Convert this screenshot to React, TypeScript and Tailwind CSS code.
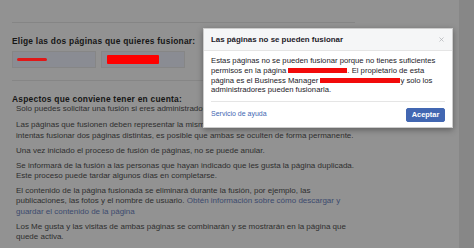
import { X } from 'lucide-react'

const bodyFont = { fontFamily: '"Liberation Sans", Arial, sans-serif' }

function Redacted({ className }: { className: string }): JSX.Element {
  return <span className={`inline-block align-middle bg-[#f20a0a] ${className}`} />
}

function MergeErrorDialog(): JSX.Element {
  return (
    <div className="absolute left-[203px] top-[28px] w-[250px] h-[100px] bg-white flex flex-col shadow-[0_2px_6px_rgba(0,0,0,0.35)] border border-[#7f7f7f]/40">
      {/* Header */}
      <div className="h-[22px] shrink-0 flex items-center justify-between px-[7px] bg-[#f5f6f7] border-b border-[#e5e5e5]">
        <span className="text-[7.9px] font-bold text-[#1d2129]">Las páginas no se pueden fusionar</span>
        <X className="w-[7px] h-[7px] text-[#b0b3b8]" strokeWidth={2.5} />
      </div>

      {/* Body */}
      <div className="px-[7px] pt-[5px] text-[7.7px] leading-[9.8px] text-[#1d2129]">
        <div className="whitespace-nowrap">Estas páginas no se pueden fusionar porque no tienes suficientes</div>
        <div className="whitespace-nowrap">
          permisos en la página <Redacted className="w-[59px] h-[5px] -mt-[1px]" />. El propietario de esta
        </div>
        <div className="whitespace-nowrap">
          página es el Business Manager <Redacted className="w-[80px] h-[5px] -mt-[1px]" />y solo los
        </div>
        <div className="whitespace-nowrap">administradores pueden fusionarla.</div>
      </div>

      {/* Footer */}
      <div className="mx-[7px] mt-auto border-t border-[#e5e5e5] h-[26px] flex items-center justify-between">
        <span className="text-[7px] text-[#4267b2]">Servicio de ayuda</span>
        <button className="w-[39px] h-[14px] bg-[#4267b2] border border-[#4267b2] rounded-[2px] text-white text-[7.4px] font-bold flex items-center justify-center">
          Aceptar
        </button>
      </div>
    </div>
  )
}

function App(): JSX.Element {
  return (
    <div className="relative w-[474px] h-[248px] overflow-hidden bg-[#878787]" style={bodyFont}>
      <div className="w-[459px] h-full bg-[#929292] pl-[12px] pt-[22px] text-[#2b2b2b]">
        <div className="w-[343px] border-t border-[#858585]" />

        <h2 className="mt-[13px] text-[8.4px] font-bold tracking-[0.25px] text-[#161616] leading-[10px]">
          Elige las dos páginas que quieres fusionar:
        </h2>

        <div className="mt-[5px] flex gap-[5px]">
          <div className="w-[84px] h-[17px] bg-[#8a8c93] border border-[#868686] flex items-center pl-[4px]">
            <span className="block w-[30px] h-[3px] bg-[#e01818] rounded-full" />
          </div>
          <div className="w-[84px] h-[17px] bg-[#8a8c93] border border-[#868686] flex items-center pl-[5px]">
            <span className="block w-[52px] h-[9px] bg-[#ff0000] rounded-[1px]" />
          </div>
        </div>

        <div className="mt-[12px] w-[430px] border-t border-[#868686]" />

        <h2 className="mt-[13px] text-[8.4px] font-bold tracking-[0.25px] text-[#161616] leading-[10px]">
          Aspectos que conviene tener en cuenta:
        </h2>

        {/* only the parts not hidden by the dialog are shown */}
        <div className="pl-[4px] text-[8px] leading-[10.4px] text-[#2e2e2e] whitespace-nowrap">
          <p>Solo puedes solicitar una fusión si eres administrador</p>

          <p className="mt-[6px]">
            Las páginas que fusionen deben representar la misma
            <br />
            intentas fusionar dos páginas distintas, es posible que ambas se oculten de forma permanente.
          </p>

          <p className="mt-[4.5px]">Una vez iniciado el proceso de fusión de páginas, no se puede anular.</p>

          <p className="mt-[4.5px]">
            Se informará de la fusión a las personas que hayan indicado que les gusta la página duplicada.
            <br />
            Este proceso puede tardar algunos días en completarse.
          </p>

          <p className="mt-[4.5px]">
            El contenido de la página fusionada se eliminará durante la fusión, por ejemplo, las
            <br />
            publicaciones, las fotos y el nombre de usuario.{' '}
            <span className="text-[#3c4a6e]">Obtén información sobre cómo descargar y</span>
            <br />
            <span className="text-[#3c4a6e]">guardar el contenido de la página</span>
          </p>

          <p className="mt-[4.5px]">
            Los Me gusta y las visitas de ambas páginas se combinarán y se mostrarán en la página que
            <br />
            quede activa.
          </p>
        </div>
      </div>

      <MergeErrorDialog />
    </div>
  )
}

export default App
